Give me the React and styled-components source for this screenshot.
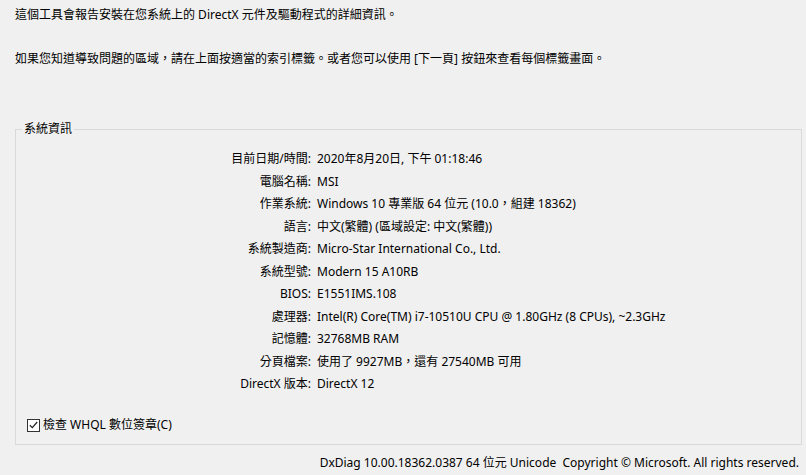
import React from "react";
import styled, { createGlobalStyle } from "styled-components";

const GlobalStyle = createGlobalStyle`
  html, body {
    margin: 0;
    padding: 0;
    background: #f0f0f0;
  }
  body {
    font-family: "Noto Sans", "Noto Sans CJK TC", sans-serif;
    font-size: 12px;
    color: #000;
  }
`;

const Page = styled.div`
  width: 806px;
  height: 475px;
  box-sizing: border-box;
  padding: 6px 4px 0 15px;
  display: flex;
  flex-direction: column;
  overflow: hidden;
`;

const Intro = styled.p`
  margin: 0 0 ${(p) => p.$gap}px;
  line-height: 18px;
  white-space: nowrap;
`;

const Group = styled.fieldset`
  margin: 0;
  padding: 0;
  border: 1px solid #d9d9d9;
`;

const Legend = styled.legend`
  margin-left: 6px;
  padding: 0 2px;
  line-height: 16px;
`;

const GroupBody = styled.div`
  height: 307px;
  display: flex;
  flex-direction: column;
`;

const InfoGrid = styled.div`
  display: grid;
  grid-template-columns: 295px auto;
  column-gap: 6px;
  margin-top: 11px;
`;

const Label = styled.div`
  text-align: right;
  line-height: 22.5px;
  white-space: nowrap;
`;

const Value = styled.div`
  line-height: 22.5px;
  white-space: nowrap;
`;

const CheckRow = styled.label`
  display: flex;
  align-items: center;
  gap: 3px;
  margin-top: auto;
  margin-bottom: 11px;
  margin-left: 11px;
  line-height: 16px;
`;

const Box = styled.span`
  width: 13px;
  height: 13px;
  box-sizing: border-box;
  border: 1px solid #333;
  background: #fff;
  display: inline-flex;
  align-items: center;
  justify-content: center;
`;

const Footer = styled.div`
  text-align: right;
  white-space: pre;
  line-height: 18px;
  margin-top: 9px;
  padding-right: 3px;
`;

const rows = [
  ["目前日期/時間:", "2020年8月20日, 下午 01:18:46"],
  ["電腦名稱:", "MSI"],
  ["作業系統:", "Windows 10 專業版 64 位元 (10.0，組建 18362)"],
  ["語言:", "中文(繁體) (區域設定: 中文(繁體))"],
  ["系統製造商:", "Micro-Star International Co., Ltd."],
  ["系統型號:", "Modern 15 A10RB"],
  ["BIOS:", "E1551IMS.108"],
  ["處理器:", "Intel(R) Core(TM) i7-10510U CPU @ 1.80GHz (8 CPUs), ~2.3GHz"],
  ["記憶體:", "32768MB RAM"],
  ["分頁檔案:", "使用了 9927MB，還有 27540MB 可用"],
  ["DirectX 版本:", "DirectX 12"],
];

export default function App() {
  return (
    <>
      <GlobalStyle />
      <Page>
        <Intro $gap={26}>這個工具會報告安裝在您系統上的 DirectX 元件及驅動程式的詳細資訊。</Intro>
        <Intro $gap={53}>如果您知道導致問題的區域，請在上面按適當的索引標籤。或者您可以使用 [下一頁] 按鈕來查看每個標籤畫面。</Intro>
        <Group>
          <Legend>系統資訊</Legend>
          <GroupBody>
            <InfoGrid>
              {rows.map(([k, v]) => (
                <React.Fragment key={k}>
                  <Label>{k}</Label>
                  <Value>{v}</Value>
                </React.Fragment>
              ))}
            </InfoGrid>
            <CheckRow>
              <Box>
                <svg width="9" height="8" viewBox="0 0 9 8">
                  <path d="M0.8 4.2 L3.3 6.6 L8.2 1" fill="none" stroke="#222" strokeWidth="1.2" />
                </svg>
              </Box>
              檢查 WHQL 數位簽章(C)
            </CheckRow>
          </GroupBody>
        </Group>
        <Footer>DxDiag 10.00.18362.0387 64 位元 Unicode  Copyright © Microsoft. All rights reserved.</Footer>
      </Page>
    </>
  );
}
